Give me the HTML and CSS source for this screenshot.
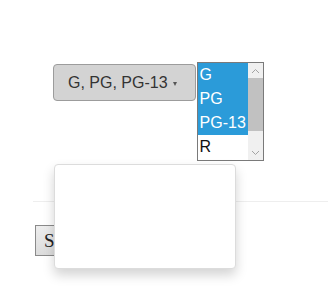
FILE: index.html
```html
<!DOCTYPE html>
<html>
<head>
<meta charset="utf-8">
<link rel="stylesheet" href="styles.css">
</head>
<body>
<div class="page">
  <div class="group">
    <button class="ms-btn"><span class="ms-text">G, PG, PG-13</span><span class="caret"></span></button>
    <div class="listbox">
      <div class="options">
        <div class="opt sel">G</div>
        <div class="opt sel">PG</div>
        <div class="opt sel">PG-13</div>
        <div class="opt">R</div>
      </div>
      <div class="scrollbar">
        <div class="arrow up"><svg width="9" height="6" viewBox="0 0 9 6"><path d="M1 5 L4.5 1.5 L8 5" fill="none" stroke="#a3a3a3" stroke-width="1"/></svg></div>
        <div class="track"><div class="thumb"></div></div>
        <div class="arrow down"><svg width="9" height="6" viewBox="0 0 9 6"><path d="M1 1 L4.5 4.5 L8 1" fill="none" stroke="#a3a3a3" stroke-width="1"/></svg></div>
      </div>
    </div>
    <div class="menu"></div>
  </div>
  <hr class="rule">
  <button class="submit">Submit</button>
</div>
</body>
</html>
```
FILE: styles.css
```css
html, body {
  margin: 0;
  padding: 0;
  background: #fff;
}
body {
  min-height: 307px;
}
.page {
  min-height: 307px;
  box-sizing: border-box;
  padding: 62px 0 0 33px;
}
.group {
  position: relative;
  display: inline-flex;
  align-items: flex-start;
  margin-left: 20px;
}
.ms-btn {
  display: flex;
  align-items: center;
  box-sizing: border-box;
  height: 37px;
  margin: 2px 0 0 0;
  padding: 0 18px 0 14px;
  border: 1px solid #9c9c9c;
  border-radius: 4px;
  background: #d3d3d3;
  font-family: "Liberation Sans", Arial, sans-serif;
  font-size: 16px;
  color: #333;
}
.caret {
  display: inline-block;
  width: 0;
  height: 0;
  margin-left: 5px;
  margin-top: 2px;
  border-left: 2.5px solid transparent;
  border-right: 2.5px solid transparent;
  border-top: 4px solid #555;
}
.listbox {
  display: flex;
  box-sizing: border-box;
  width: 67px;
  height: 99px;
  margin-left: 1px;
  border: 1px solid #7a7a7a;
  background: #fff;
  font-family: "Liberation Sans", Arial, sans-serif;
  font-size: 16px;
}
.options {
  flex: 1;
  display: flex;
  flex-direction: column;
  overflow: hidden;
}
.opt {
  height: 24px;
  line-height: 24px;
  padding-left: 2px;
  color: #111;
  white-space: nowrap;
}
.opt.sel {
  background: #2b9bd9;
  color: #fff;
}
.scrollbar {
  width: 15px;
  display: flex;
  flex-direction: column;
  background: #f0f0f0;
}
.arrow {
  height: 15px;
  display: flex;
  align-items: center;
  justify-content: center;
}
.track {
  flex: 1;
  display: flex;
  flex-direction: column;
}
.thumb {
  height: 53px;
  background: #c1c1c1;
}
.menu {
  position: absolute;
  top: calc(100% + 3px);
  left: 1px;
  width: 182px;
  height: 105px;
  box-sizing: border-box;
  background: #fff;
  border: 1px solid #dcdcdc;
  border-radius: 4px;
  box-shadow: 0 6px 12px rgba(0, 0, 0, 0.175);
  z-index: 10;
}
.rule {
  margin: 40px 0 0 0;
  border: 0;
  border-top: 1px solid #eeeeee;
  height: 0;
}
.submit {
  display: block;
  margin: 23px 0 0 2px;
  box-sizing: border-box;
  height: 31px;
  padding: 0 8px;
  border: 1px solid #8a8a8a;
  background: linear-gradient(#ededed, #dcdcdc);
  font-family: "Liberation Serif", "Times New Roman", serif;
  font-size: 19px;
  color: #222;
}
```
